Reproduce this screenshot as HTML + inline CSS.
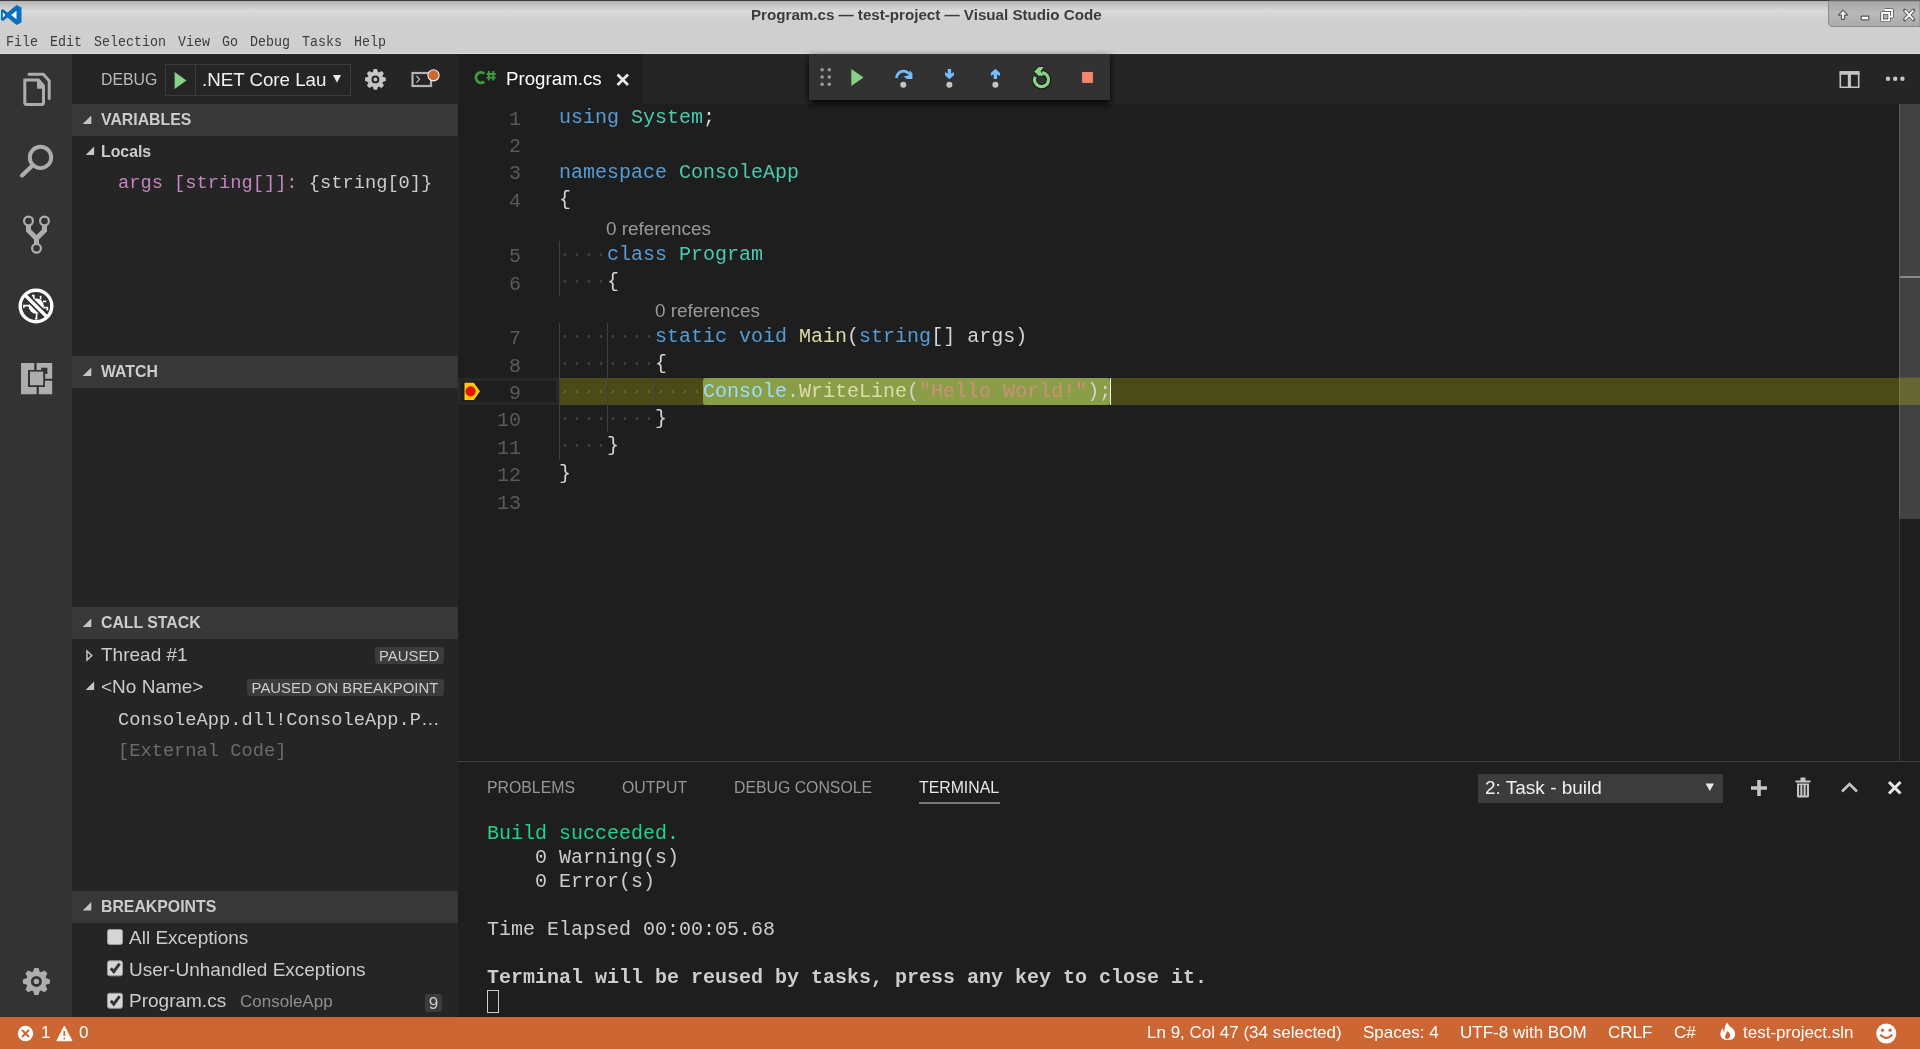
<!DOCTYPE html>
<html><head><meta charset="utf-8">
<style>
*{margin:0;padding:0;box-sizing:border-box}
html,body{width:1920px;height:1049px;overflow:hidden;background:#1e1e1e;font-family:"Liberation Sans",sans-serif}
.a{position:absolute;white-space:pre}
.m{font-family:"Liberation Mono",monospace}
#title{left:0;top:0;width:1920px;height:30px;background:linear-gradient(#b4b4b4 0px,#dadada 10px,#cfcfcf 19px,#cfcfcf);border-top:1px solid #3a3a3a}
#menu{left:0;top:30px;width:1920px;height:24px;background:linear-gradient(#cfcfcf 22.5px,#dcdcdc 23px)}
#act{left:0;top:54px;width:72px;height:963px;background:#333333}
#side{left:72px;top:54px;width:386px;height:963px;background:#252526}
#tabs{left:458px;top:54px;width:1462px;height:50px;background:#252526}
#tab1{left:458px;top:54px;width:185px;height:50px;background:#1e1e1e}
#editor{left:458px;top:104px;width:1462px;height:657px;background:#1e1e1e}
#panel{left:458px;top:761px;width:1462px;height:256px;background:#1e1e1e;border-top:1px solid #414141}
#status{left:0;top:1017px;width:1920px;height:32px;background:#cc6633}
.sh{left:72px;width:386px;height:32px;background:#383838}
.sht{font-weight:bold;font-size:15.84px;color:#cccccc;line-height:32px}
.ui{font-size:19px;color:#cccccc;line-height:32px}
.code{font-family:"Liberation Mono",monospace;font-size:20px;line-height:27.36px;color:#d4d4d4}
.ln{font-family:"Liberation Mono",monospace;font-size:20px;line-height:27.36px;color:#5a5a5a;text-align:right;width:80px;left:441px;margin-top:1.5px}
.ln2{margin-top:2.5px}
.kw{color:#569cd6}.ty{color:#4ec9b0}.fn{color:#dcdcaa}.st{color:#ce9178}.vr{color:#9cdcfe}
.ws{color:rgba(227,227,227,0.16)}
.lens{font-size:18.9px;color:#999999;line-height:27.36px;margin-top:1px;margin-left:-1px}
.term{font-family:"Liberation Mono",monospace;font-size:20px;line-height:24px;color:#cccccc}
.stt{font-size:17px;color:#ffffff;line-height:32px;top:1016.5px}
.badge{background:#3c3c3c;border-radius:3px;font-size:14.9px;color:#cccccc;height:17px;line-height:18.5px}
#root{position:absolute;left:0;top:0;width:1920px;height:1049px;overflow:hidden;will-change:transform}
</style></head><body><div id="root">
<div id="title" class="a"></div>
<div id="menu" class="a"></div>
<div id="act" class="a"></div>
<div id="side" class="a"></div>
<div id="tabs" class="a"></div>
<div id="tab1" class="a"></div>
<div id="editor" class="a"></div>
<div id="panel" class="a"></div>
<div id="status" class="a"></div>

<!-- title text -->
<div class="a" style="left:751px;top:5px;font-weight:bold;font-size:15.15px;color:#3c3c3c;line-height:20px">Program.cs — test-project — Visual Studio Code</div>
<!-- menu -->
<div class="a m" style="left:6px;top:34px;font-size:13.33px;line-height:18px;color:#3c3c3c;transform:scaleY(1.16);transform-origin:0 13px">File</div>
<div class="a m" style="left:50px;top:34px;font-size:13.33px;line-height:18px;color:#3c3c3c;transform:scaleY(1.16);transform-origin:0 13px">Edit</div>
<div class="a m" style="left:94px;top:34px;font-size:13.33px;line-height:18px;color:#3c3c3c;transform:scaleY(1.16);transform-origin:0 13px">Selection</div>
<div class="a m" style="left:178px;top:34px;font-size:13.33px;line-height:18px;color:#3c3c3c;transform:scaleY(1.16);transform-origin:0 13px">View</div>
<div class="a m" style="left:222px;top:34px;font-size:13.33px;line-height:18px;color:#3c3c3c;transform:scaleY(1.16);transform-origin:0 13px">Go</div>
<div class="a m" style="left:250px;top:34px;font-size:13.33px;line-height:18px;color:#3c3c3c;transform:scaleY(1.16);transform-origin:0 13px">Debug</div>
<div class="a m" style="left:302px;top:34px;font-size:13.33px;line-height:18px;color:#3c3c3c;transform:scaleY(1.16);transform-origin:0 13px">Tasks</div>
<div class="a m" style="left:354px;top:34px;font-size:13.33px;line-height:18px;color:#3c3c3c;transform:scaleY(1.16);transform-origin:0 13px">Help</div>

<!-- sidebar header -->
<div class="a" style="left:101px;top:64px;font-size:15.84px;color:#bbbbbb;line-height:32px">DEBUG</div>
<div class="a" style="left:165px;top:64px;width:186px;height:32px;border:1px solid #3c3c3c;background:#252526"></div>
<div class="a" style="left:195px;top:65px;width:1px;height:30px;background:#3c3c3c"></div>
<div class="a" style="left:202px;top:64px;width:124.5px;overflow:hidden;font-size:18.72px;color:#f0f0f0;line-height:32px">.NET Core Lau</div>

<!-- sections -->
<div class="a sh" style="top:104px"></div>
<div class="a sht" style="left:101px;top:104px">VARIABLES</div>
<div class="a ui" style="left:101px;top:136px;font-weight:bold;font-size:15.84px">Locals</div>
<div class="a m" style="left:118px;top:167px;font-size:18.72px;line-height:32px;color:#c586c0">args [string[]]: <span style="color:#cccccc">{string[0]}</span></div>

<div class="a sh" style="top:356px"></div>
<div class="a sht" style="left:101px;top:356px">WATCH</div>

<div class="a sh" style="top:607px"></div>
<div class="a sht" style="left:101px;top:607px">CALL STACK</div>
<div class="a ui" style="left:101px;top:639px">Thread #1</div>
<div class="a badge" style="left:375px;top:647px;width:69px;padding-left:4px">PAUSED</div>
<div class="a ui" style="left:101px;top:671px">&lt;No Name&gt;</div>
<div class="a badge" style="left:247px;top:679px;width:197px;padding-left:4.6px">PAUSED ON BREAKPOINT</div>
<div class="a m" style="left:118px;top:703px;font-size:18.72px;line-height:32px;color:#cccccc">ConsoleApp.dll!ConsoleApp.P<span style="font-family:'Liberation Sans'">…</span></div>
<div class="a m" style="left:118px;top:735px;font-size:18.72px;line-height:32px;color:#6b6b6b">[External Code]</div>

<div class="a sh" style="top:891px"></div>
<div class="a sht" style="left:101px;top:891px">BREAKPOINTS</div>
<div class="a ui" style="left:129px;top:922px">All Exceptions</div>
<div class="a ui" style="left:129px;top:954px">User-Unhandled Exceptions</div>
<div class="a ui" style="left:129px;top:985px">Program.cs</div>
<div class="a ui" style="left:240px;top:986px;font-size:17px;color:#8f8f8f">ConsoleApp</div>
<div class="a badge" style="left:425px;top:994px;width:17px;height:18px;line-height:19px;font-size:17px;text-align:center">9</div>

<!-- tab -->
<div class="a" style="left:506px;top:63px;font-size:18.72px;color:#ffffff;line-height:32px">Program.cs</div>

<!-- editor -->
<div class="a" style="left:559px;top:377.60px;width:1341px;height:27.36px;background:#4b4b18"></div>
<div class="a" style="left:703px;top:377.60px;width:407px;height:27.36px;background:#8a9e48;border-radius:3px"></div>
<div class="a" style="left:1110px;top:377.60px;width:1px;height:27.36px;background:#f0f0f0"></div>
<div class="a" style="left:458px;top:377.60px;width:101px;height:27.36px;border:3px solid #282828"></div>
<div class="a ln" style="top:104.00px">1</div>
<div class="a code" style="left:559px;top:104.00px"><span class="kw">using</span> <span class="ty">System</span>;</div>
<div class="a ln" style="top:131.36px">2</div>
<div class="a ln" style="top:158.72px">3</div>
<div class="a code" style="left:559px;top:158.72px"><span class="kw">namespace</span> <span class="ty">ConsoleApp</span></div>
<div class="a ln" style="top:186.08px">4</div>
<div class="a code" style="left:559px;top:186.08px">{</div>
<div class="a lens" style="left:607px;top:214.44px">0 references</div>
<div class="a ln ln2" style="top:240.80px">5</div>
<div class="a code" style="left:559px;top:240.80px"><span class="ws">····</span><span class="kw">class</span> <span class="ty">Program</span></div>
<div class="a ln ln2" style="top:268.16px">6</div>
<div class="a code" style="left:559px;top:268.16px"><span class="ws">····</span>{</div>
<div class="a lens" style="left:656px;top:295.52px">0 references</div>
<div class="a ln ln2" style="top:322.88px">7</div>
<div class="a code" style="left:559px;top:322.88px"><span class="ws">········</span><span class="kw">static</span> <span class="kw">void</span> <span class="fn">Main</span>(<span class="kw">string</span>[] args)</div>
<div class="a ln ln2" style="top:350.24px">8</div>
<div class="a code" style="left:559px;top:350.24px"><span class="ws">········</span>{</div>
<div class="a ln ln2" style="top:377.60px">9</div>
<div class="a code" style="left:559px;top:377.60px"><span class="ws">············</span><span class="vr">Console</span>.<span class="fn">WriteLine</span>(<span class="st">"Hello World!"</span>);</div>
<div class="a ln ln2" style="top:404.96px">10</div>
<div class="a code" style="left:559px;top:404.96px"><span class="ws">········</span>}</div>
<div class="a ln ln2" style="top:432.32px">11</div>
<div class="a code" style="left:559px;top:432.32px"><span class="ws">····</span>}</div>
<div class="a ln ln2" style="top:459.68px">12</div>
<div class="a code" style="left:559px;top:459.68px">}</div>
<div class="a ln ln2" style="top:487.04px">13</div>
<div class="a" style="left:559px;top:240.80px;width:1px;height:54.72px;background:#404040"></div>
<div class="a" style="left:559px;top:322.88px;width:1px;height:136.80px;background:#404040"></div>
<div class="a" style="left:607px;top:322.88px;width:1px;height:109.44px;background:#404040"></div>

<div class="a" style="left:655px;top:377.60px;width:1px;height:27.36px;background:#404040"></div>
<!-- panel -->
<div class="a" style="left:487px;top:772px;font-size:15.84px;color:#969696;line-height:32px">PROBLEMS</div>
<div class="a" style="left:622px;top:772px;font-size:15.84px;color:#969696;line-height:32px">OUTPUT</div>
<div class="a" style="left:734px;top:772px;font-size:15.84px;color:#969696;line-height:32px">DEBUG CONSOLE</div>
<div class="a" style="left:919px;top:772px;font-size:15.84px;color:#e7e7e7;line-height:32px">TERMINAL</div>
<div class="a" style="left:919px;top:802px;width:81px;height:2px;background:#7a7a7a"></div>
<div class="a" style="left:1478px;top:774px;width:245px;height:29px;background:#3c3c3c"></div>
<div class="a" style="left:1485px;top:773px;font-size:19px;color:#f0f0f0;line-height:30px">2: Task - build</div>

<div class="a term" style="left:487px;top:822px"><span style="color:#23d18b">Build succeeded.</span>
    0 Warning(s)
    0 Error(s)

Time Elapsed 00:00:05.68

<b>Terminal will be reused by tasks, press any key to close it.</b>
</div>
<div class="a" style="left:487px;top:990px;width:12px;height:23px;border:1px solid #cccccc"></div>

<!-- status -->
<div class="a stt" style="left:41px">1</div>
<div class="a stt" style="left:79px">0</div>
<div class="a stt" style="left:1147px">Ln 9, Col 47 (34 selected)</div>
<div class="a stt" style="left:1363px">Spaces: 4</div>
<div class="a stt" style="left:1460px">UTF-8 with BOM</div>
<div class="a stt" style="left:1608px">CRLF</div>
<div class="a stt" style="left:1674px">C#</div>
<div class="a stt" style="left:1743px">test-project.sln</div>

<svg class="a" style="left:0;top:0" width="1920" height="1049" viewBox="0 0 1920 1049">
<!-- vscode logo -->
<path d="M16.5,5 L21.5,7.5 V22.5 L16.5,25 L7.5,17.5 L3,21 L1,20 V10 L3,9 L7.5,12.5 Z" fill="#0b6fc0"/><path d="M16.5,10.8 L11.2,15 L16.5,19.2 Z M2.8,12.2 V17.8 L5.4,15 Z" fill="#ffffff"/>
<!-- window buttons -->
<path d="M1828.5,1 H1920 V26.5 H1833 Q1828.5,26.5 1828.5,22 Z" fill="url(#wbg)" stroke="#8c8c8c" stroke-width="1"/>
<defs><linearGradient id="wbg" x1="0" y1="0" x2="0" y2="1"><stop offset="0" stop-color="#a6a6a6"/><stop offset="0.5" stop-color="#b9b9b9"/><stop offset="1" stop-color="#a9a9a9"/></linearGradient></defs>
<g stroke="#5a5a5a" stroke-width="1.2" stroke-linejoin="round" fill="#ffffff">
<path d="M1843,10.2 L1847.6,15.1 H1844.5 V19.3 H1841.5 V15.1 H1838.4 Z"/>
<rect x="1861.2" y="16.2" width="7.6" height="3.6" rx="0.5"/>
</g>
<g stroke="#5a5a5a" stroke-width="3.6" fill="none" stroke-linejoin="round">
<path d="M1885,10 H1892 V16.6 H1889.6 M1882,13 H1889.2 V20.3 H1882 Z"/>
<path d="M1904.8,10.4 L1913.4,19.6 M1913.4,10.4 L1904.8,19.6" stroke-linecap="round"/>
</g>
<g stroke="#ffffff" stroke-width="1.8" fill="none">
<path d="M1885,10 H1892 V16.6 H1889.6 M1882,13 H1889.2 V20.3 H1882 Z"/>
<path d="M1904.8,10.4 L1913.4,19.6 M1913.4,10.4 L1904.8,19.6"/>
</g>

<!-- activity bar: files -->
<g fill="none" stroke="#adadad" stroke-width="3">
<path d="M24.8,80 H38.4 L43.5,85.8 V102.5 Q43.5,104.5 41.5,104.5 H26.8 Q24.8,104.5 24.8,102.5 Z"/>
<path d="M29,74.3 H43.3 L49.2,80.8 V98.5" stroke-linecap="round"/>
</g>
<path d="M37,79 H38.6 L44.8,85.8 V88.8 H37 Z" fill="#adadad"/>
<!-- search -->
<circle cx="40.5" cy="157.4" r="10.7" fill="none" stroke="#adadad" stroke-width="3.9"/>
<path d="M32,166 L22,175.5" stroke="#adadad" stroke-width="4.2" stroke-linecap="round"/>
<!-- git -->
<g fill="none" stroke="#adadad">
<circle cx="28.5" cy="221" r="4.4" stroke-width="2.2"/>
<circle cx="44.5" cy="221" r="4.4" stroke-width="2.2"/>
<circle cx="36.5" cy="248.3" r="4.4" stroke-width="2.2"/>
<path d="M28.5,225 V230.5 L36.5,238.5 M44.5,225 V230.5 L36.5,238.5 V244" stroke-width="5" stroke-linejoin="miter"/>
</g>
<!-- debug (active) -->
<circle cx="36.3" cy="306.2" r="7.6" fill="#ffffff"/>
<g stroke="#ffffff" stroke-width="1.6" fill="none">
<path d="M33.8,299.5 V295.6 H32"/>
<path d="M40.6,299.5 V295.8"/>
<path d="M43,301.4 H46.3"/>
<path d="M44,307.6 H47.4 V310.5"/>
<path d="M29,305.6 H23.8 V308"/>
<path d="M36.6,313.5 V318.6 H35"/>
</g>
<path d="M24,294 L48.6,318.6" stroke="#333333" stroke-width="6.8"/>
<path d="M25.5,295.5 L47,317" stroke="#ffffff" stroke-width="3.2"/>
<circle cx="36" cy="306" r="15.8" fill="none" stroke="#ffffff" stroke-width="3.4"/>
<!-- extensions -->
<path d="M21,363 H34.3 V370 H28 V387 H36.6 V394.2 H21 Z" fill="#adadad"/>
<path d="M36.6,363 H52.2 V378.7 H45.2 V373.9 H47.4 V367.7 H41.2 V370 H36.6 Z" fill="#adadad"/>
<path d="M45,380.8 H52.2 V394.2 H38.8 V387 H45 Z" fill="#adadad"/>
<rect x="30" y="371.6" width="13.2" height="13.6" fill="#adadad"/>
<!-- settings gear -->
<path d="M33.00,971.80 L34.40,967.90 L38.40,967.90 L39.80,971.80 L40.78,972.21 L44.53,970.44 L47.36,973.27 L45.59,977.02 L46.00,978.00 L49.90,979.40 L49.90,983.40 L46.00,984.80 L45.59,985.78 L47.36,989.53 L44.53,992.36 L40.78,990.59 L39.80,991.00 L38.40,994.90 L34.40,994.90 L33.00,991.00 L32.02,990.59 L28.27,992.36 L25.44,989.53 L27.21,985.78 L26.80,984.80 L22.90,983.40 L22.90,979.40 L26.80,978.00 L27.21,977.02 L25.44,973.27 L28.27,970.44 L32.02,972.21Z" fill="#adadad"/>
<circle cx="36.4" cy="981.4" r="4.1" fill="none" stroke="#333333" stroke-width="2.8"/>

<!-- sidebar header icons -->
<path d="M174.6,72 L186.5,80.5 L174.6,89 Z" fill="#89d185"/>
<path d="M333,75 H341 L337,82.8 Z" fill="#e8e8e8"/>
<path d="M372.80,72.10 L373.80,69.00 L377.00,69.00 L378.00,72.10 L378.72,72.40 L381.62,70.91 L383.89,73.18 L382.40,76.08 L382.70,76.80 L385.80,77.80 L385.80,81.00 L382.70,82.00 L382.40,82.72 L383.89,85.62 L381.62,87.89 L378.72,86.40 L378.00,86.70 L377.00,89.80 L373.80,89.80 L372.80,86.70 L372.08,86.40 L369.18,87.89 L366.91,85.62 L368.40,82.72 L368.10,82.00 L365.00,81.00 L365.00,77.80 L368.10,76.80 L368.40,76.08 L366.91,73.18 L369.18,70.91 L372.08,72.40Z" fill="#c5c5c5"/>
<circle cx="375.4" cy="79.4" r="2.9" fill="none" stroke="#252526" stroke-width="2"/>
<!-- console icon -->
<rect x="412.5" y="73" width="18.5" height="13" fill="none" stroke="#b3b3b3" stroke-width="2.2"/>
<path d="M416.5,76 L419.5,79.3 L416.5,82.6" fill="none" stroke="#b3b3b3" stroke-width="1.3"/>
<circle cx="433.5" cy="75.3" r="5.6" fill="#cc6633" stroke="#f0f0f0" stroke-width="1.1"/>

<!-- tree twisties -->
<path d="M91.3,115.5 V124 H82.7 Z" fill="#c5c5c5"/>
<path d="M94.1,146.5 V155 H85.6 Z" fill="#c5c5c5"/>
<path d="M91.3,367.5 V376 H82.7 Z" fill="#c5c5c5"/>
<path d="M91.3,618.5 V627 H82.7 Z" fill="#c5c5c5"/>
<path d="M87,651 L91.8,655.5 L87,660 Z" fill="none" stroke="#c5c5c5" stroke-width="1.5"/>
<path d="M94.1,681.5 V690 H85.6 Z" fill="#c5c5c5"/>
<path d="M91.3,902 V910.5 H82.7 Z" fill="#c5c5c5"/>

<!-- checkboxes -->
<g>
<rect x="107.5" y="929.5" width="15" height="15" rx="2" fill="#d6d6d6" stroke="#9a9a9a" stroke-width="1"/>
<rect x="107.5" y="960.8" width="15" height="15" rx="2" fill="#d6d6d6" stroke="#9a9a9a" stroke-width="1"/>
<rect x="107.5" y="993.3" width="15" height="15" rx="2" fill="#d6d6d6" stroke="#9a9a9a" stroke-width="1"/>
<path d="M110.8,968.3 L113.8,971.6 L119.6,963.6" fill="none" stroke="#333333" stroke-width="2.9"/>
<path d="M110.8,1000.8 L113.8,1004.1 L119.6,996.1" fill="none" stroke="#333333" stroke-width="2.9"/>
</g>

<!-- tab icon & close -->
<path d="M484.2,73.6 A5,5.2 0 1 0 484.2,81.6" fill="none" stroke="#3f9b3f" stroke-width="2.9"/>
<path d="M488.8,71 V80.4 M493.3,71 V80.4 M486.5,74 H495.6 M486.5,77.6 H495.6" stroke="#3f9b3f" stroke-width="1.9"/>
<path d="M617.5,74.5 L628,85 M628,74.5 L617.5,85" stroke="#e8e8e8" stroke-width="2.8"/>

<!-- editor actions -->
<g fill="none" stroke="#c5c5c5">
<path d="M1840.3,72.8 V87.2 H1858.7 V72.8" stroke-width="1.6"/>
<path d="M1839.5,72.9 H1859.5" stroke-width="3.7"/>
<path d="M1849.4,74 V87" stroke-width="3.1"/>
</g>
<circle cx="1888" cy="78.8" r="2.2" fill="#c5c5c5"/>
<circle cx="1895.2" cy="78.8" r="2.2" fill="#c5c5c5"/>
<circle cx="1902.4" cy="78.8" r="2.2" fill="#c5c5c5"/>

<!-- debug toolbar -->
<defs><filter id="sh" x="-10%" y="-50%" width="120%" height="200%"><feDropShadow dx="0" dy="3" stdDeviation="3.5" flood-color="#000" flood-opacity="1"/></filter></defs>
<rect x="809" y="54" width="301" height="46" fill="#333333" filter="url(#sh)"/>
<g fill="#9a9a9a">
<circle cx="822.1" cy="69.8" r="1.8"/><circle cx="829.3" cy="69.8" r="1.8"/>
<circle cx="822.1" cy="77" r="1.8"/><circle cx="829.3" cy="77" r="1.8"/>
<circle cx="822.1" cy="84.2" r="1.8"/><circle cx="829.3" cy="84.2" r="1.8"/>
</g>
<path d="M851.3,69 L863.5,77.5 L851.3,86 Z" fill="#89d185"/>
<!-- step over -->
<path d="M896.2,77.8 Q898,71.4 903.5,71.2 Q906.6,71.1 908.6,73.8" fill="none" stroke="#75beff" stroke-width="2.7"/>
<path d="M910,70.4 L912.4,73.6 V79.1 H906.7 L903.7,76.5 L908.2,75.4 Z" fill="#75beff"/>
<circle cx="903.3" cy="84.8" r="3" fill="#c5c5c5"/>
<!-- step into -->
<path d="M945,72.1 L947.7,73.8 V69 H951.1 V73.8 L953.9,72.1 V75.3 L949.4,79.2 L945,75.3 Z" fill="#75beff"/>
<circle cx="949.4" cy="84.8" r="3" fill="#c5c5c5"/>
<!-- step out -->
<path d="M995.4,68.8 L1000,73 V76 L997.1,74.3 V79 H993.7 V74.3 L990.8,76 V73 Z" fill="#75beff"/>
<circle cx="995.4" cy="84.8" r="3" fill="#c5c5c5"/>
<!-- restart -->
<g stroke="#1a1a1a" stroke-width="1.3" stroke-linejoin="round">
<path d="M1042.1,72.7 A7,7 0 1 1 1035.2,76.7" fill="none" stroke-width="5.6"/>
<path d="M1034.2,71.5 L1038.8,67 H1043.8 L1040.6,71.3 L1043.6,75.8 H1038.6 Z" fill="#1a1a1a"/>
</g>
<path d="M1042.1,72.7 A7,7 0 1 1 1035.2,76.7" fill="none" stroke="#89d185" stroke-width="3.2"/>
<path d="M1034.2,71.5 L1038.8,67 H1043.8 L1040.6,71.3 L1043.6,75.8 H1038.6 Z" fill="#89d185"/>
<!-- stop -->
<rect x="1081.7" y="71.5" width="11.6" height="11.8" fill="#f48771" stroke="#2a2a2a" stroke-width="0.8"/>

<!-- breakpoint glyph -->
<path d="M464.5,382.8 H473.8 L480,391.3 L473.8,400 H464.5 Z" fill="#ffcc00"/>
<circle cx="470.6" cy="391.3" r="5.1" fill="#e51400"/>

<!-- panel actions -->
<path d="M1751,788 H1767 M1759,780 V796" stroke="#c5c5c5" stroke-width="3.6"/>
<g fill="#c5c5c5">
<path d="M1795.5,780.5 H1810.5 V782.5 H1795.5 Z M1800.5,777.5 H1805.5 V780.5 H1800.5Z"/>
<path d="M1797,783.5 H1809 V796 Q1809,797.6 1807.4,797.6 H1798.6 Q1797,797.6 1797,796 Z"/>
</g>
<path d="M1799.7,785 V795.5 M1803,785 V795.5 M1806.3,785 V795.5" stroke="#1e1e1e" stroke-width="1.2"/>
<path d="M1842,791.5 L1849.5,784 L1857,791.5" fill="none" stroke="#c5c5c5" stroke-width="2.6"/>
<path d="M1889,782 L1900.5,793.5 M1900.5,782 L1889,793.5" stroke="#e8e8e8" stroke-width="3"/>
<path d="M1705.6,783.5 H1714 L1709.8,791 Z" fill="#e8e8e8"/>

<!-- status bar icons -->
<circle cx="25.5" cy="1033.5" r="7.7" fill="#ffffff"/>
<path d="M22,1030 L29,1037 M29,1030 L22,1037" stroke="#cc6633" stroke-width="2"/>
<path d="M64.3,1026 L72,1040.8 H56.8 Z" fill="#ffffff" stroke="#ffffff" stroke-width="0.8" stroke-linejoin="round"/>
<path d="M64.3,1031 V1036" stroke="#cc6633" stroke-width="1.8"/>
<circle cx="64.3" cy="1038.5" r="0.9" fill="#cc6633"/>
<!-- flame -->
<path d="M1727,1022.5 Q1729,1026 1732,1028 Q1735.5,1031 1735,1035 Q1734.5,1040 1728,1040 Q1721,1040 1720.3,1034.5 Q1720,1031 1723,1028 Q1722.8,1031 1724.5,1032 Q1724,1027 1727,1022.5 Z" fill="#ffffff"/>
<path d="M1727.5,1031 Q1731,1034 1730,1037 Q1729,1039 1727.5,1039 Q1725,1039 1725,1036.5 Q1725.5,1034 1727.5,1031Z" fill="#cc6633"/>
<!-- smiley -->
<circle cx="1886.3" cy="1033.6" r="10" fill="#ffffff"/>
<circle cx="1882.5" cy="1030.2" r="1.6" fill="#cc6633"/>
<circle cx="1890.1" cy="1030.2" r="1.6" fill="#cc6633"/>
<path d="M1880.3,1034.6 Q1886.3,1041.4 1892.3,1034.6" fill="none" stroke="#cc6633" stroke-width="2"/>

<!-- scrollbar -->
<rect x="1899" y="104" width="1" height="657" fill="#3a3a3a"/>
<rect x="1900" y="104" width="20" height="415" fill="#424242"/>
<rect x="1899" y="104" width="1" height="415" fill="#5a5a5a"/>
<rect x="1900" y="276" width="20" height="2" fill="#8a8a8a"/>
<rect x="1899" y="377.6" width="21" height="27.36" fill="rgba(255,255,0,0.2)"/>
</svg>

</div></body></html>
